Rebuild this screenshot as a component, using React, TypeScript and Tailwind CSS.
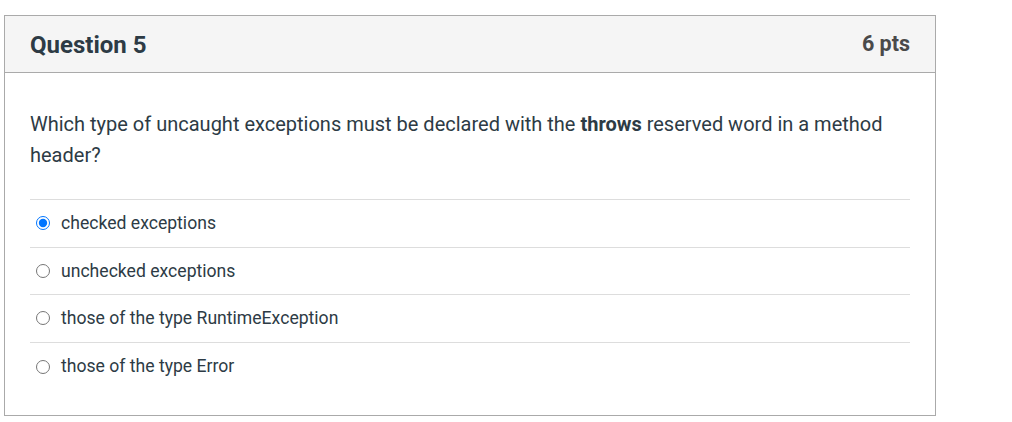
import { useState } from 'react';

const options = [
  'checked exceptions',
  'unchecked exceptions',
  'those of the type RuntimeException',
  'those of the type Error',
];

export default function App() {
  const [selected, setSelected] = useState(0);

  return (
    <div className="w-[1012px] h-[422px] bg-white pt-[15px] pl-[4px] font-['Roboto',sans-serif] text-[#2d3b45]">
      <div className="w-[932px] h-[401px] border border-[#aaaaaa] flex flex-col">
        {/* Header */}
        <div className="h-[57px] bg-[#f5f5f5] border-b border-[#aaaaaa] flex items-center justify-between pl-[25px] pr-[25px]">
          <h2 className="text-[24px] font-bold pt-[1px]">Question 5</h2>
          <span className="text-[21.5px] font-bold text-[#4a4a4a] pt-[1px]">6 pts</span>
        </div>

        {/* Body */}
        <div className="pl-[25px] pr-[25px] pt-[36px]">
          <p className="text-[20px] leading-[31px]">
            Which type of uncaught exceptions must be declared with the <strong>throws</strong> reserved word in a method header?
          </p>

          <div className="mt-[28px] border-t border-[#dddddd]">
            {options.map((opt, i) => (
              <label
                key={opt}
                className={`flex items-center h-[47.6px] ${i < options.length - 1 ? 'border-b border-[#dddddd]' : ''}`}
              >
                <input
                  type="radio"
                  name="q5"
                  checked={selected === i}
                  onChange={() => setSelected(i)}
                  className="w-[14px] h-[14px] ml-[6px] mr-[11px] m-0"
                />
                <span className="text-[17.6px]">{opt}</span>
              </label>
            ))}
          </div>
        </div>
      </div>
    </div>
  );
}
